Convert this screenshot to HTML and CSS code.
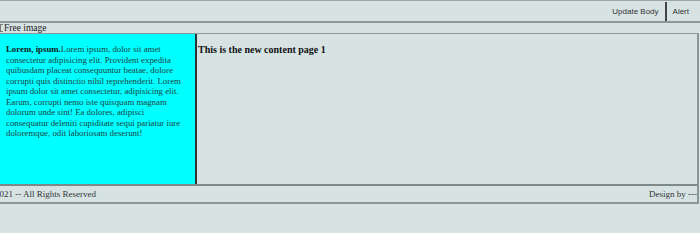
FILE: index.html
```
<!DOCTYPE html>
<html lang="en">
<head>
    <meta charset="UTF-8" />
    <meta name="viewport" content="width=device-width, initial-scale=1.0"/>
    <title>Page 1</title>
    <link rel="stylesheet" href="styles.css">
</head>
<body>

    <header class="topbar">
        <button class="btn" id="updateBtn">Update Body</button>
        <span class="sep"></span>
        <button class="btn" id="alertBtn">Alert</button>
    </header>

    <div class="logo-row"><span class="broken-img"></span>Free image</div>

    <main class="page">
        <aside class="sidebar">
            <p><b>Lorem, ipsum.</b>Lorem ipsum, dolor sit amet consectetur adipisicing elit. Provident expedita quibusdam placeat consequuntur beatae, dolore corrupti quis distinctio nihil reprehenderit. Lorem ipsum dolor sit amet consectetur, adipisicing elit. Earum, corrupti nemo iste quisquam magnam dolorum unde sint! Ea dolores, adipisci consequatur deleniti cupiditate sequi pariatur iure doloremque, odit laboriosam deserunt!</p>
        </aside>
        <section class="content" id="content">
            <h3>This is the new content page 1</h3>
        </section>
    </main>

    <footer class="footer">
        <span class="copy">2021 -- All Rights Reserved</span>
        <span>Design by ---</span>
    </footer>

</body>
</html>
```

FILE: styles.css
```
* {
    margin: 0;
    padding: 0;
    box-sizing: border-box;
}

body {
    font-family: 'Liberation Serif', 'Times New Roman', serif;
    background-color: #d7e3e3;
    color: #222;
    height: 233px;
    overflow: hidden;
}

.topbar {
    display: flex;
    justify-content: flex-end;
    align-items: center;
    height: 23px;
    border-top: 1px solid #9aa6a6;
    border-bottom: 2px solid #8c9898;
    padding-right: 5px;
}

.btn {
    background: none;
    border: none;
    font-family: 'Liberation Sans', Arial, sans-serif;
    font-size: 8px;
    color: #333;
    padding: 0 6px;
}

.sep {
    width: 2px;
    height: 19px;
    background-color: #444;
}

.logo-row {
    display: flex;
    align-items: center;
    height: 10px;
    font-size: 9.5px;
    line-height: 10px;
    color: #222;
}

.broken-img {
    width: 3px;
    height: 8px;
    border: 1px solid #777;
    border-right: none;
    margin-right: 1px;
}

.page {
    display: flex;
    height: 153px;
    border-top: 1px solid #8c9898;
    border-right: 2px solid #8c9898;
    border-bottom: 2px solid #7e8a8a;
    margin-right: 1px;
}

.sidebar {
    width: 197px;
    flex-shrink: 0;
    background-color: #00ffff;
    border-right: 2px solid #2b3535;
    padding: 10px 7px 10px 6px;
}

.sidebar p {
    font-size: 8.8px;
    line-height: 10.5px;
    color: #1d4343;
}

.sidebar b {
    color: #102020;
}

.content {
    flex: 1;
    padding: 10px 0 0 1px;
}

.content h3 {
    font-size: 10px;
    font-weight: bold;
    color: #111;
}

.footer {
    display: flex;
    justify-content: space-between;
    align-items: center;
    height: 18px;
    border-right: 2px solid #8c9898;
    border-bottom: 2px solid #8c9898;
    margin-right: 1px;
    font-size: 9px;
    color: #333;
    overflow: hidden;
}

.copy {
    margin-left: -5px;
}
```
